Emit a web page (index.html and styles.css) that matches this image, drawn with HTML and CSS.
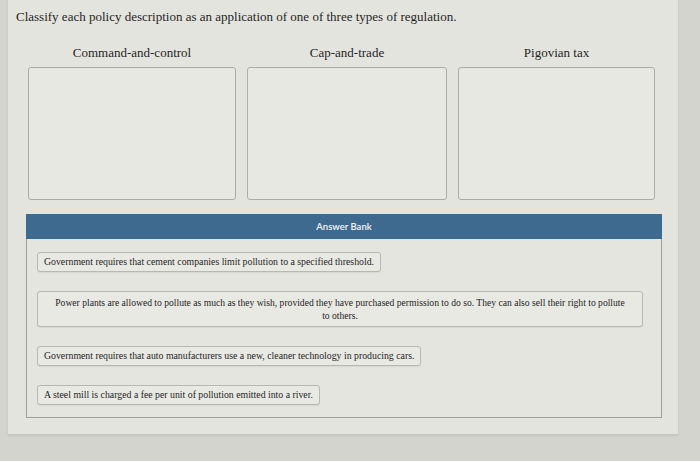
FILE: index.html
```html
<!doctype html>
<html lang="en">

<head>
	<meta charset="UTF-8">
	<title>Classify policy descriptions</title>
	<link rel="stylesheet" href="styles.css">
</head>

<body>
	<div class="Panel">
		<p class="Prompt">Classify each policy description as an application of one of three types of regulation.</p>

		<div class="Bins">
			<div class="Bin">
				<div class="BinTitle">Command-and-control</div>
				<div class="BinDrop"></div>
			</div>
			<div class="Bin">
				<div class="BinTitle">Cap-and-trade</div>
				<div class="BinDrop"></div>
			</div>
			<div class="Bin">
				<div class="BinTitle">Pigovian tax</div>
				<div class="BinDrop"></div>
			</div>
		</div>

		<div class="Bank">
			<div class="BankHead">Answer Bank</div>
			<div class="BankBody">
				<div class="Item">Government requires that cement companies limit pollution to a specified threshold.</div>
				<div class="Item Wide">Power plants are allowed to pollute as much as they wish, provided they have purchased permission to do so. They can also sell their right to pollute to others.</div>
				<div class="Item">Government requires that auto manufacturers use a new, cleaner technology in producing cars.</div>
				<div class="Item">A steel mill is charged a fee per unit of pollution emitted into a river.</div>
			</div>
		</div>
	</div>
</body>

</html>
```

FILE: styles.css
```css
html,
body {
	margin: 0;
	height: 100%;
	background-color: #d4d4ce;
}

body {
	font-family: "Liberation Serif", "Times New Roman", serif;
	color: #252525;
}

div.Panel {
	width: 670px;
	margin-left: 8px;
	padding: 0 0 16px 0;
	background-color: #e4e4df;
	border-bottom: 1px solid #c6c6c0;
	box-shadow: 0 1px 2px rgba(0, 0, 0, 0.08);
}

p.Prompt {
	margin: 0;
	padding: 9px 0 0 8px;
	font-size: 13px;
	line-height: 16px;
}

div.Bins {
	display: grid;
	grid-template-columns: 208px 200px 197px;
	column-gap: 11px;
	margin: 21px 0 0 20px;
}

div.BinTitle {
	text-align: center;
	font-size: 13px;
	line-height: 14px;
	margin-bottom: 7px;
}

div.BinDrop {
	height: 131px;
	border: 1.5px solid #acaca7;
	border-radius: 3px;
	background-color: #e8e8e3;
}

div.Bank {
	margin: 14px 16px 0 18px;
}

div.BankHead {
	height: 25px;
	line-height: 26px;
	background-color: #3f6a8f;
	color: #f4f6f8;
	text-align: center;
	font-family: Lato, "Open Sans", sans-serif;
	font-size: 9.5px;
	font-weight: 600;
}

div.BankBody {
	display: flex;
	flex-direction: column;
	align-items: flex-start;
	gap: 19px;
	padding: 13px 10px 12px 10px;
	border: 1px solid #9e9e99;
	border-top: 0;
	background-color: #e5e5e0;
}

div.Item {
	padding: 3px 6px;
	font-size: 9.8px;
	line-height: 12px;
	color: #1e1e1e;
	border: 1px solid #b8b8b3;
	border-radius: 3px;
	background-color: #e9e9e4;
	box-shadow: 0 1px 1px rgba(0, 0, 0, 0.06);
}

div.Wide {
	box-sizing: border-box;
	width: 606px;
	padding: 4px 17px;
	font-size: 9.6px;
	line-height: 13px;
	text-align: center;
}
```
